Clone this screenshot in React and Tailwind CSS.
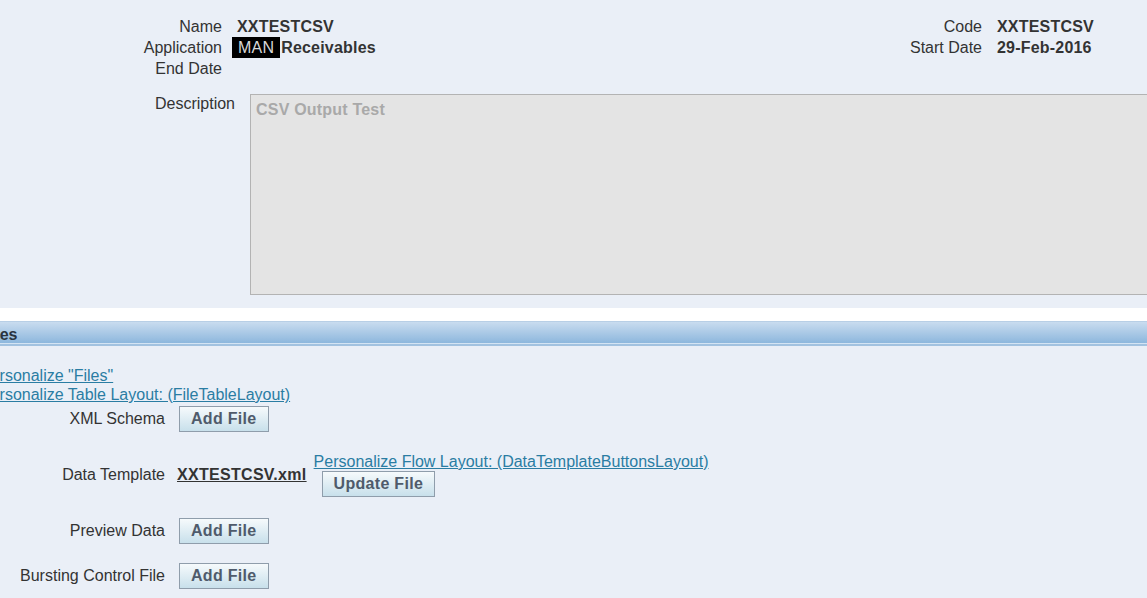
export default function App() {
  const font = { fontFamily: '"Liberation Sans", Arial, sans-serif' };

  const FileButton = ({ children, className = "" }) => (
    <button
      className={`h-[26px] px-[11px] border border-[#8f9dab] bg-gradient-to-b from-[#f6fafc] to-[#c8e0eb] text-[16px] font-bold tracking-[0.3px] text-[#4f5b6b] leading-none ${className}`}
    >
      {children}
    </button>
  );

  return (
    <div className="w-[1147px] h-[598px] overflow-hidden bg-[#eaeff7] text-[#333333] text-[16px]" style={font}>
      {/* Header fields */}
      <div className="flex pt-[16px] h-[308px]">
        <div className="flex flex-col flex-1">
          <div className="grid grid-cols-[222px_1fr] gap-x-[15px] leading-[21px]">
            <span className="text-right">Name</span>
            <span className="font-bold tracking-[0.2px]">XXTESTCSV</span>
            <span className="text-right">Application</span>
            <span className="font-bold tracking-[0.2px]">
              <span className="bg-black text-[#d8d8d8] font-normal px-[6px] py-[2px] -ml-[5px] mr-[1px]">MAN</span>
              Receivables
            </span>
            <span className="text-right">End Date</span>
            <span></span>
          </div>
          <div className="flex mt-[15px]">
            <span className="w-[235px] text-right leading-[21px] -mt-[1px]">Description</span>
            <div className="ml-[15px] w-[920px] h-[201px] border border-[#b3b3b3] bg-[#e4e4e4] px-[5px] pt-[3px]">
              <span className="font-bold text-[#a9a9a9] leading-[21px] tracking-[0.2px]">CSV Output Test</span>
            </div>
          </div>
        </div>
      </div>

      {/* Right column */}
      <div className="-mt-[308px] h-[308px] flex justify-end pointer-events-none">
        <div className="pt-[16px] w-[300px]">
          <div className="grid grid-cols-[135px_1fr] gap-x-[15px] leading-[21px]">
            <span className="text-right">Code</span>
            <span className="font-bold tracking-[0.2px]">XXTESTCSV</span>
            <span className="text-right">Start Date</span>
            <span className="font-bold tracking-[0.2px]">29-Feb-2016</span>
          </div>
        </div>
      </div>

      {/* White band */}
      <div className="h-[13px] bg-white"></div>

      {/* Files section header */}
      <div className="h-[22px] border-t border-[#b8cfe6] bg-gradient-to-b from-[#c9dcef] to-[#8db7dd] flex items-center pt-[4px]">
        <span className="-ml-[19px] font-bold text-[#2a3440] leading-none">Files</span>
      </div>
      <div className="h-[1px] bg-[#d4e4f3]"></div>
      <div className="h-[2px] bg-[#a2c2e0]"></div>

      {/* Files content */}
      <div className="-ml-[20px] pt-[20px]">
        <div className="flex flex-col leading-[19px] text-[#2a7da3]">
          <a className="underline w-fit">Personalize "Files"</a>
          <a className="underline w-fit">Personalize Table Layout: (FileTableLayout)</a>
        </div>

        <div className="flex flex-col gap-[20px] mt-[2px]">
          <div className="flex items-center">
            <span className="w-[185px] text-right">XML Schema</span>
            <FileButton className="ml-[14px]">Add File</FileButton>
          </div>

          <div className="flex items-center">
            <span className="w-[185px] text-right">Data Template</span>
            <span className="ml-[12px] font-bold underline tracking-[0.3px]">XXTESTCSV.xml</span>
            <div className="ml-[7px] flex flex-col items-start">
              <a className="underline text-[#2a7da3] leading-[19px]">Personalize Flow Layout: (DataTemplateButtonsLayout)</a>
              <FileButton className="ml-[8px]">Update File</FileButton>
            </div>
          </div>

          <div className="flex items-center mt-[1px]">
            <span className="w-[185px] text-right">Preview Data</span>
            <FileButton className="ml-[14px]">Add File</FileButton>
          </div>

          <div className="flex items-center -mt-[1px]">
            <span className="w-[185px] text-right">Bursting Control File</span>
            <FileButton className="ml-[14px]">Add File</FileButton>
          </div>
        </div>
      </div>
    </div>
  );
}
